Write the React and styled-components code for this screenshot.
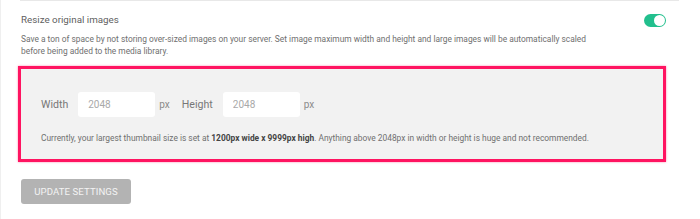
import React from "react";
import styled, { createGlobalStyle } from "styled-components";

const GlobalStyle = createGlobalStyle`
  html, body {
    margin: 0;
    padding: 0;
    background: #ffffff;
    font-family: Roboto, "Liberation Sans", Arial, sans-serif;
  }
  * {
    box-sizing: border-box;
  }
`;

export default function App() {
  return (
    <>
      <GlobalStyle />
      <Panel>
        <Section>
          <Header>
            <Title>Resize original images</Title>
            <Toggle aria-label="Resize original images" />
          </Header>
          <Description>
            Save a ton of space by not storing over-sized images on your server.
            Set image maximum width and height and large images will be
            automatically scaled before being added to the media library.
          </Description>

          <Highlight>
            <Fields>
              <Label>Width</Label>
              <Input placeholder="2048" />
              <Unit>px</Unit>
              <Label>Height</Label>
              <Input placeholder="2048" />
              <Unit>px</Unit>
            </Fields>
            <Note>
              Currently, your largest thumbnail size is set at{" "}
              <strong>1200px wide x 9999px high</strong>. Anything above 2048px
              in width or height is huge and not recommended.
            </Note>
          </Highlight>

          <Button>Update Settings</Button>
        </Section>
      </Panel>
    </>
  );
}

// styling
const Panel = styled.div`
  border-left: 1px solid #efefef;
  padding: 0 21px 0 19px;
  height: 219px;
`;

const Section = styled.div`
  border-top: 1px solid #e8e8e8;
  padding-top: 12px;
`;

const Header = styled.div`
  display: flex;
  align-items: center;
  justify-content: space-between;
  padding: 0 13px 0 1px;
`;

const Title = styled.h3`
  margin: 0;
  font-size: 9.8px;
  font-weight: 400;
  color: #5f5f5f;
  line-height: 14px;
`;

const Toggle = styled.span`
  position: relative;
  display: block;
  width: 22px;
  height: 13px;
  border-radius: 7px;
  background: #22bf8d;

  &::after {
    content: "";
    position: absolute;
    top: 1px;
    right: 1px;
    width: 11px;
    height: 11px;
    border-radius: 50%;
    background: #ffffff;
  }
`;

const Description = styled.p`
  margin: 6px 0 0 1px;
  max-width: 575px;
  font-size: 8.4px;
  line-height: 12px;
  color: #6f6f6f;
`;

const Highlight = styled.div`
  margin: 9px 13px 0 -2px;
  background: #f2f2f2;
  border: 3px solid #ff1461;
  box-shadow: 0 0 2px rgba(255, 20, 97, 0.5);
  padding: 23px 20px 15px;
`;

const Fields = styled.div`
  display: flex;
  align-items: center;
`;

const Label = styled.span`
  font-size: 10.6px;
  font-weight: 400;
  color: #777777;
  margin-right: 10px;
`;

const Input = styled.input`
  width: 77px;
  height: 25px;
  border: none;
  border-radius: 3px;
  background: #ffffff;
  padding: 0 10px;
  font-family: inherit;
  font-size: 10px;
  color: #555;
  outline: none;

  &::placeholder {
    color: #a9a9a9;
  }
`;

const Unit = styled.span`
  font-size: 10px;
  color: #8a8a8a;
  margin: 0 12px 0 4px;
`;

const Note = styled.p`
  margin: 15px 0 0;
  font-size: 8.4px;
  line-height: 12px;
  color: #707070;

  strong {
    font-weight: 700;
    color: #444;
  }
`;

const Button = styled.button`
  display: block;
  margin: 17px 0 0 1px;
  width: 110px;
  height: 25px;
  border: none;
  border-radius: 3px;
  background: #b3b3b3;
  color: #f4f4f4;
  font-family: inherit;
  font-size: 9.6px;
  font-weight: 400;
  text-transform: uppercase;
  letter-spacing: 0.1px;
`;
